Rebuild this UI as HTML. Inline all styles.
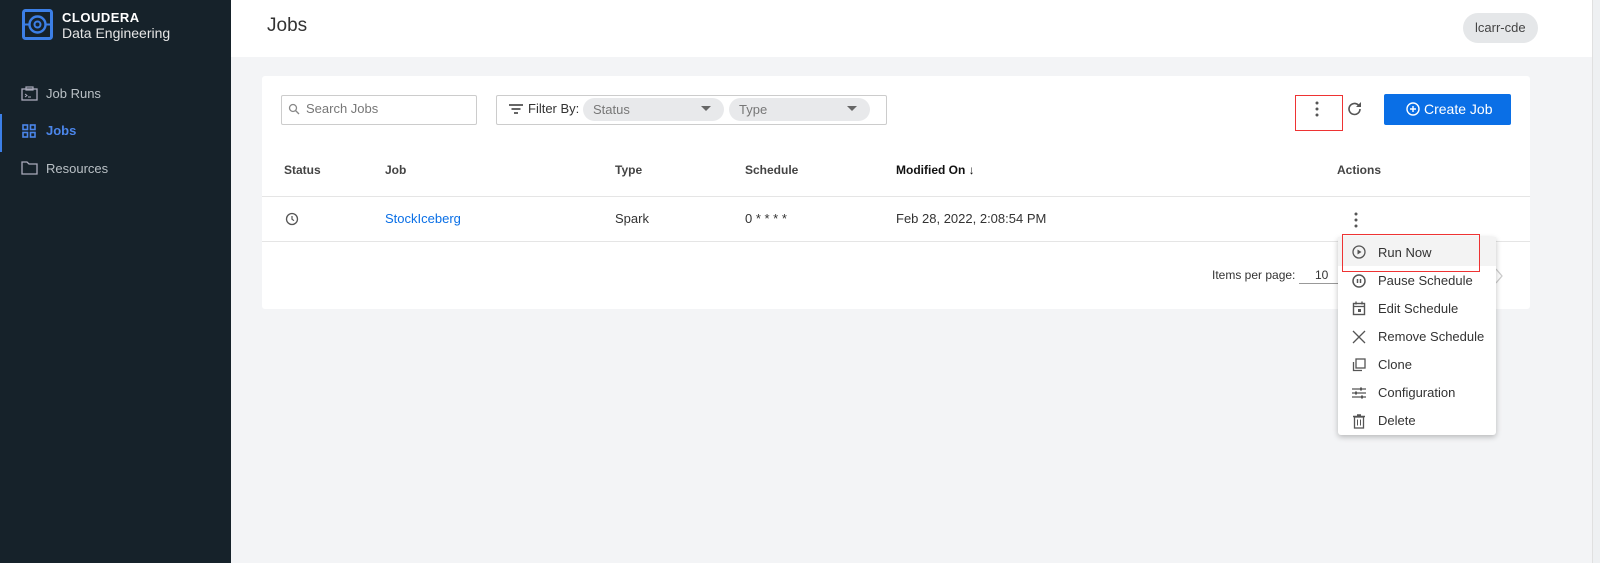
<!DOCTYPE html>
<html><head><meta charset="utf-8"><style>
*{box-sizing:border-box;margin:0;padding:0}
body{width:1600px;height:563px;overflow:hidden;font-family:"Liberation Sans",sans-serif;background:#f3f4f6;position:relative;color:#333;font-size:13px}
.abs{position:absolute;white-space:nowrap}
.side{left:0;top:0;width:231px;height:563px;background:#16222a}
.hdr{left:231px;top:0;width:1361px;height:57px;background:#fff}
.strip{left:1592px;top:0;width:8px;height:563px;background:#eef0f2;border-left:1px solid #e0e0e0}
.card{left:262px;top:76px;width:1268px;height:233px;background:#fff;border-radius:3px}
.nav{color:#b9c0c5;font-size:13px}
.th{font-size:12px;color:#444;font-weight:bold;top:163px}
.td{font-size:13px;color:#333;top:211px}
.menu{left:1338px;top:237px;width:158px;height:198px;background:#fff;border-radius:3px;box-shadow:0 2px 6px rgba(0,0,0,.25)}
.mi{position:absolute;left:40px;font-size:13px;color:#333;white-space:nowrap}
.ic{position:absolute;left:14px}
</style></head><body>
<div class="abs side"></div>
<svg class="abs" style="left:22px;top:9px" width="31" height="31" viewBox="0 0 31 31"><rect x="1.5" y="1.5" width="28" height="28" rx="2" fill="none" stroke="#3c7fe6" stroke-width="3"/><circle cx="15.5" cy="15.5" r="8" fill="none" stroke="#3c7fe6" stroke-width="2.4"/><circle cx="15.5" cy="15.5" r="3" fill="none" stroke="#3c7fe6" stroke-width="2"/><line x1="1" y1="15.5" x2="7" y2="15.5" stroke="#3c7fe6" stroke-width="2"/><line x1="24" y1="15.5" x2="30" y2="15.5" stroke="#3c7fe6" stroke-width="2"/></svg>
<div class="abs" style="left:62px;top:10px;color:#fff;font-weight:bold;font-size:13px;letter-spacing:.5px">CLOUDERA</div>
<div class="abs" style="left:62px;top:25px;color:#e6e6e6;font-size:14px">Data Engineering</div>
<svg class="abs" style="left:21px;top:86px" width="17" height="15"><rect x="1" y="3" width="15" height="11" fill="none" stroke="#aab" stroke-width="1.3"/><rect x="5" y="1" width="7" height="3" fill="none" stroke="#aab" stroke-width="1.2"/><path d="M4 8l2 1.5-2 1.5M7 11h3" stroke="#aab" fill="none"/></svg>
<div class="abs nav" style="left:46px;top:86px">Job Runs</div>
<div class="abs" style="left:0;top:114px;width:2px;height:38px;background:#3c7fe6"></div>
<svg class="abs" style="left:22px;top:124px" width="14" height="14"><g fill="none" stroke="#4b86ea" stroke-width="1.6"><rect x="1" y="1" width="4.5" height="4.5"/><rect x="8.5" y="1" width="4.5" height="4.5"/><rect x="1" y="8.5" width="4.5" height="4.5"/><rect x="8.5" y="8.5" width="4.5" height="4.5"/></g></svg>
<div class="abs" style="left:46px;top:123px;color:#4b86ea;font-weight:bold;font-size:13px">Jobs</div>
<svg class="abs" style="left:21px;top:161px" width="17" height="14"><path d="M1 1h5l2 2h8v10H1z" fill="none" stroke="#aab" stroke-width="1.3"/></svg>
<div class="abs nav" style="left:46px;top:161px">Resources</div>
<div class="abs hdr"></div>
<div class="abs strip"></div>
<div class="abs" style="left:267px;top:15px;font-size:19px;color:#333">Jobs</div>
<div class="abs" style="left:1463px;top:13px;height:30px;background:#e5e7e9;border-radius:15px;color:#444;font-size:13px;line-height:30px;padding:0 12px">lcarr-cde</div>
<div class="abs card"></div>
<div class="abs" style="left:281px;top:95px;width:196px;height:30px;border:1px solid #ccc;border-radius:2px"></div>
<svg class="abs" style="left:288px;top:103px" width="12" height="12"><circle cx="5" cy="5" r="3.5" fill="none" stroke="#888" stroke-width="1.3"/><line x1="7.5" y1="7.5" x2="11" y2="11" stroke="#888" stroke-width="1.3"/></svg>
<div class="abs" style="left:306px;top:101px;color:#777;font-size:13px">Search Jobs</div>
<div class="abs" style="left:496px;top:95px;width:391px;height:30px;border:1px solid #ccc;border-radius:2px"></div>
<svg class="abs" style="left:509px;top:104px" width="14" height="11"><path d="M0 1h14M2.5 5h9M5 9h4" stroke="#333" stroke-width="1.6"/></svg>
<div class="abs" style="left:528px;top:101px;font-size:13px">Filter By:</div>
<div class="abs" style="left:583px;top:98px;width:141px;height:23px;background:#e8e9eb;border-radius:12px;color:#777;font-size:13px;line-height:23px;padding-left:10px">Status</div>
<div class="abs" style="left:729px;top:98px;width:141px;height:23px;background:#e8e9eb;border-radius:12px;color:#777;font-size:13px;line-height:23px;padding-left:10px">Type</div>
<svg class="abs" style="left:701px;top:106px" width="10" height="6"><path d="M0 0h10L5 5z" fill="#666"/></svg>
<svg class="abs" style="left:847px;top:106px" width="10" height="6"><path d="M0 0h10L5 5z" fill="#666"/></svg>
<div class="abs" style="left:1295px;top:95px;width:48px;height:36px;border:1.5px solid #e33"></div>
<svg class="abs" style="left:1315px;top:101px" width="4" height="16"><circle cx="2" cy="2" r="1.5" fill="#555"/><circle cx="2" cy="8" r="1.5" fill="#555"/><circle cx="2" cy="14" r="1.5" fill="#555"/></svg>
<svg class="abs" style="left:1347px;top:101px" width="16" height="16"><path d="M13 8a5.5 5.5 0 1 1-1.6-3.9" fill="none" stroke="#555" stroke-width="1.6"/><path d="M13.5 1.5v4h-4" fill="#555" stroke="#555" stroke-width="1"/></svg>
<div class="abs" style="left:1384px;top:94px;width:127px;height:31px;background:#0a6fe6;border-radius:2px;color:#fff;font-size:14px;line-height:31px;padding-left:40px">Create Job</div>
<svg class="abs" style="left:1406px;top:102px" width="14" height="14"><circle cx="7" cy="7" r="6" fill="none" stroke="#fff" stroke-width="1.4"/><path d="M7 4v6M4 7h6" stroke="#fff" stroke-width="1.4"/></svg>
<div class="abs th" style="left:284px">Status</div>
<div class="abs th" style="left:385px">Job</div>
<div class="abs th" style="left:615px">Type</div>
<div class="abs th" style="left:745px">Schedule</div>
<div class="abs th" style="left:896px;color:#111">Modified On ↓</div>
<div class="abs th" style="left:1337px">Actions</div>
<div class="abs" style="left:262px;top:196px;width:1268px;height:1px;background:#e5e5e5"></div>
<div class="abs" style="left:262px;top:241px;width:1268px;height:1px;background:#e5e5e5"></div>
<svg class="abs" style="left:285px;top:212px" width="14" height="14"><circle cx="7" cy="7" r="5.5" fill="none" stroke="#555" stroke-width="1.3"/><path d="M7 4v3.2l2 1.5" fill="none" stroke="#555" stroke-width="1.2"/></svg>
<div class="abs td" style="left:385px;color:#0a6fe6">StockIceberg</div>
<div class="abs td" style="left:615px">Spark</div>
<div class="abs td" style="left:745px">0 * * * *</div>
<div class="abs td" style="left:896px">Feb 28, 2022, 2:08:54 PM</div>
<svg class="abs" style="left:1354px;top:212px" width="4" height="16"><circle cx="2" cy="2" r="1.5" fill="#555"/><circle cx="2" cy="8" r="1.5" fill="#555"/><circle cx="2" cy="14" r="1.5" fill="#555"/></svg>
<div class="abs" style="left:1212px;top:268px;font-size:12px;color:#333">Items per page:</div>
<div class="abs" style="left:1299px;top:268px;font-size:12px;color:#333;width:45px;border-bottom:1px solid #999;height:16px;padding-left:16px">10</div>
<svg class="abs" style="left:1494px;top:268px" width="10" height="16"><path d="M2 1l6 7-6 7" fill="none" stroke="#ccc" stroke-width="1.3"/></svg>
<div class="abs menu">
<div class="abs" style="left:0;top:0;width:158px;height:29px;background:#f3f3f3"></div>
<svg class="ic" style="top:8px" width="14" height="14"><circle cx="7" cy="7" r="6" fill="none" stroke="#555" stroke-width="1.3"/><path d="M5.5 4.5v5l4-2.5z" fill="#555"/></svg><div class="mi" style="top:8px">Run Now</div>
<svg class="ic" style="top:37px" width="14" height="14"><circle cx="7" cy="7" r="6" fill="none" stroke="#555" stroke-width="1.5"/><path d="M5.5 5v4M8.5 5v4" stroke="#555" stroke-width="1.5"/></svg><div class="mi" style="top:36px">Pause Schedule</div>
<svg class="ic" style="top:64px" width="14" height="15"><rect x="1.5" y="2.5" width="11" height="11" fill="none" stroke="#555" stroke-width="1.4"/><path d="M1.5 5.5h11M4 0.5v3M10 0.5v3" stroke="#555" stroke-width="1.3"/><rect x="6" y="8" width="3" height="3" fill="#555"/></svg><div class="mi" style="top:64px">Edit Schedule</div>
<svg class="ic" style="top:93px" width="14" height="14"><path d="M1 1l12 12M13 1L1 13" stroke="#555" stroke-width="1.3"/></svg><div class="mi" style="top:92px">Remove Schedule</div>
<svg class="ic" style="top:121px" width="14" height="14"><rect x="4" y="1" width="9" height="9" fill="none" stroke="#555" stroke-width="1.3"/><path d="M1.5 4v8.5H10" fill="none" stroke="#555" stroke-width="1.3"/></svg><div class="mi" style="top:120px">Clone</div>
<svg class="ic" style="top:150px" width="14" height="12"><path d="M0 2h14M0 6h14M0 10h14" stroke="#555" stroke-width="1.2"/><rect x="8" y="0.5" width="2" height="3" fill="#555"/><rect x="3" y="4.5" width="2" height="3" fill="#555"/><rect x="9" y="8.5" width="2" height="3" fill="#555"/></svg><div class="mi" style="top:148px">Configuration</div>
<svg class="ic" style="top:177px" width="14" height="15"><path d="M1 2.5h12M5 1h4" stroke="#555" stroke-width="1.4"/><rect x="2.5" y="3" width="9" height="11" fill="none" stroke="#555" stroke-width="1.3"/><path d="M5.5 5.5v6M8.5 5.5v6" stroke="#555"/></svg><div class="mi" style="top:176px">Delete</div>
</div>
<div class="abs" style="left:1342px;top:234px;width:138px;height:38px;border:1.5px solid #e33"></div>
</body></html>
